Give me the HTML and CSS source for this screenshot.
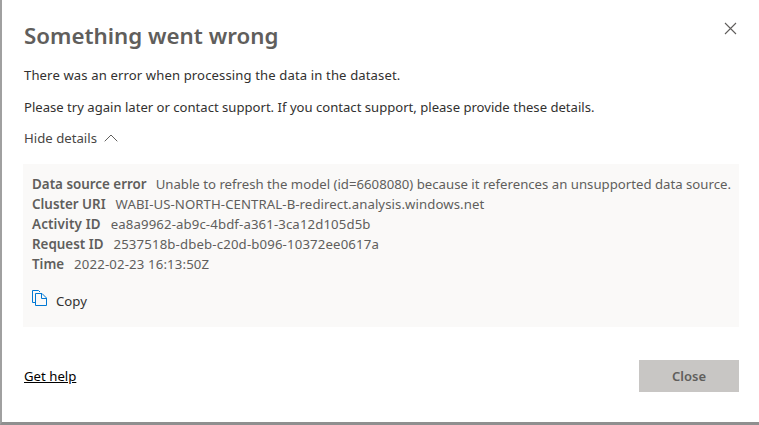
FILE: index.html
```html
<!DOCTYPE html>
<html lang="en">
<head>
<meta charset="utf-8">
<title>Something went wrong</title>
<link rel="stylesheet" href="styles.css">
</head>
<body>
<div class="dialog">
  <header class="head">
    <h1 class="title">Something went wrong</h1>
    <svg class="close-x" width="13" height="13" viewBox="0 0 13 13" aria-label="Close"><path d="M1 1l11 11M12 1L1 12" stroke="#605e5c" stroke-width="1.1" fill="none"/></svg>
  </header>
  <p class="msg first">There was an error when processing the data in the dataset.</p>
  <p class="msg second">Please try again later or contact support. If you contact support, please provide these details.</p>
  <div class="toggle"><span>Hide details</span>
    <svg width="14" height="8" viewBox="0 0 14 8"><path d="M.7 7.3L7 1l6.3 6.3" stroke="#605e5c" stroke-width="1" fill="none"/></svg>
  </div>
  <section class="details">
    <div class="row source"><b>Data source error</b><span>Unable to refresh the model (id=6608080) because it references an unsupported data source.</span></div>
    <div class="row cluster"><b>Cluster URI</b><span>WABI-US-NORTH-CENTRAL-B-redirect.analysis.windows.net</span></div>
    <div class="row activity"><b>Activity ID</b><span>ea8a9962-ab9c-4bdf-a361-3ca12d105d5b</span></div>
    <div class="row id"><b>Request ID</b><span>2537518b-dbeb-c20d-b096-10372ee0617a</span></div>
    <div class="row id"><b>Time</b><span>2022-02-23 16:13:50Z</span></div>
    <div class="copy">
      <svg width="16" height="16" viewBox="0 0 16 16"><path d="M3.5 12.5H.5V.5H6.5L8 2" stroke="#0078d4" stroke-width="1" fill="none"/><path d="M3.5 3.5H10L14.5 8V15.5H3.5Z M9.5 3.5V8.5H14.5" stroke="#0078d4" stroke-width="1" fill="none"/></svg>
      <span class="copy-label">Copy</span>
    </div>
  </section>
  <footer class="foot">
    <a class="help" href="#">Get help</a>
    <button class="close-btn" type="button">Close</button>
  </footer>
</div>
</body>
</html>
```
FILE: styles.css
```css
html, body { margin: 0; padding: 0; background: #fff; }
body { width: 759px; height: 425px; overflow: hidden; }
.dialog {
  box-sizing: border-box;
  width: 759px;
  height: 425px;
  border-left: 2px solid #a0a0a0;
  border-bottom: 3px solid #8f8f8f;
  padding: 0 20px 0 21px;
  font-family: "Noto Sans", "Open Sans", sans-serif;
  font-size: 13.2px;
  color: #323130;
  display: flex;
  flex-direction: column;
}
.head { display: flex; justify-content: space-between; align-items: flex-start; height: 65px; }
.title { margin: 19px 0 0 1px; font-size: 22.3px; line-height: 34px; font-weight: 600; color: #605e5c; }
.close-x { margin-top: 22px; margin-right: 2px; }
.msg { margin: 0 0 0 1px; line-height: 20px; font-size: 13.1px; }
.first { letter-spacing: 0.12px; }
.second { margin-top: 12px; }
.toggle { display: flex; align-items: center; gap: 7px; height: 20px; margin: 11px 0 0 1px; color: #484644; }
.details {
  margin-top: 16px;
  background: #faf9f8;
  height: 163px;
  box-sizing: border-box;
  padding: 10px 9px 0;
  color: #605e5c;
  display: flex;
  flex-direction: column;
}
.row { display: flex; gap: 10px; line-height: 20px; white-space: nowrap; }
.row b { font-weight: 600; font-size: 13.4px; }
.source { gap: 9px; }
.cluster span { letter-spacing: 0.08px; }
.id span { letter-spacing: 0.15px; }
.activity b { letter-spacing: 0.15px; }
.activity span { letter-spacing: 0.12px; }
.copy { display: flex; align-items: flex-start; gap: 8px; margin-top: 16px; color: #323130; }
.copy-label { margin-top: 1px; line-height: 20px; }
.foot { display: flex; justify-content: space-between; align-items: center; margin-top: 33px; }
.help { margin-left: 1px; color: #000; text-decoration: underline; }
.close-btn {
  width: 100px;
  height: 32px;
  border: 0;
  background: #c8c6c4;
  color: #605e5c;
  font: 600 13px "Noto Sans", "Open Sans", sans-serif;
}
```
